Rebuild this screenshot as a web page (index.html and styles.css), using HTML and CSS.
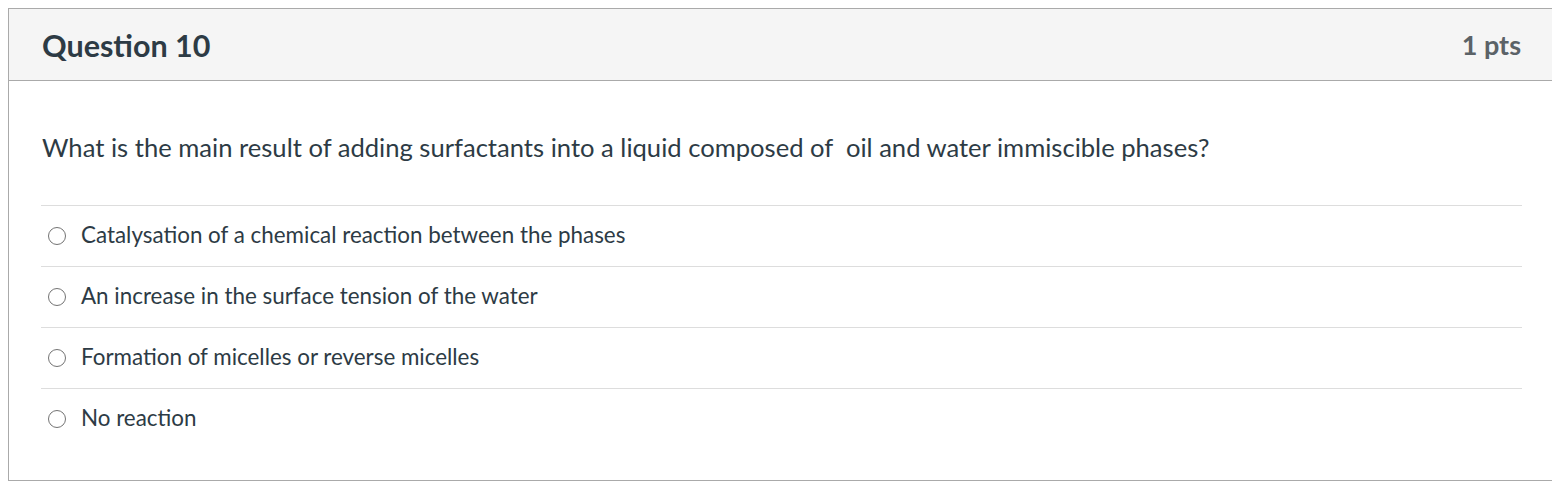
FILE: index.html
```html
<!DOCTYPE html>
<html>
<head>
<meta charset="utf-8">
<link rel="stylesheet" href="styles.css">
</head>
<body>
<div class="question">
  <div class="q-header">
    <h2 class="q-title">Question 10</h2>
    <span class="q-points">1 pts</span>
  </div>
  <div class="q-body">
    <p class="q-text">What is the main result of adding surfactants into a liquid composed of&nbsp; oil and water immiscible phases?</p>
    <div class="answers">
      <label class="answer"><span class="radio"></span><span class="answer-text">Catalysation of a chemical reaction between the phases</span></label>
      <label class="answer"><span class="radio"></span><span class="answer-text">An increase in the surface tension of the water</span></label>
      <label class="answer"><span class="radio"></span><span class="answer-text">Formation of micelles or reverse micelles</span></label>
      <label class="answer"><span class="radio"></span><span class="answer-text">No reaction</span></label>
    </div>
  </div>
</div>
</body>
</html>
```

FILE: styles.css
```css
body {
  margin: 8px;
  background: #ffffff;
  font-family: Lato, "Open Sans", "Liberation Sans", sans-serif;
  color: #2d3b45;
}

.question {
  width: 1544px;
  border: 1px solid #aaaaaa;
  box-sizing: content-box;
}

.q-header {
  height: 71px;
  background: #f5f5f5;
  border-bottom: 1px solid #aaaaaa;
  display: flex;
  align-items: center;
  justify-content: space-between;
  padding: 0 32px 0 33px;
  box-sizing: content-box;
}

.q-title {
  margin: 0;
  font-size: 30.5px;
  font-weight: 700;
  color: #2d3b45;
}

.q-points {
  font-size: 27px;
  font-weight: 700;
  color: #5b6267;
}

.q-body {
  padding: 48px 31px 31px 32px;
}

.q-text {
  margin: 0 0 40px 1px;
  font-size: 25.6px;
  line-height: 36px;
}

.answer {
  display: flex;
  align-items: center;
  height: 61px;
  padding-bottom: 3px;
  box-sizing: border-box;
  border-top: 1px solid #dddddd;
  font-size: 22.4px;
}

.radio {
  width: 18px;
  height: 18px;
  box-sizing: border-box;
  border: 1.6px solid #737373;
  border-radius: 50%;
  margin-left: 7px;
  margin-right: 15px;
  margin-top: 2px;
  flex: none;
}
```
